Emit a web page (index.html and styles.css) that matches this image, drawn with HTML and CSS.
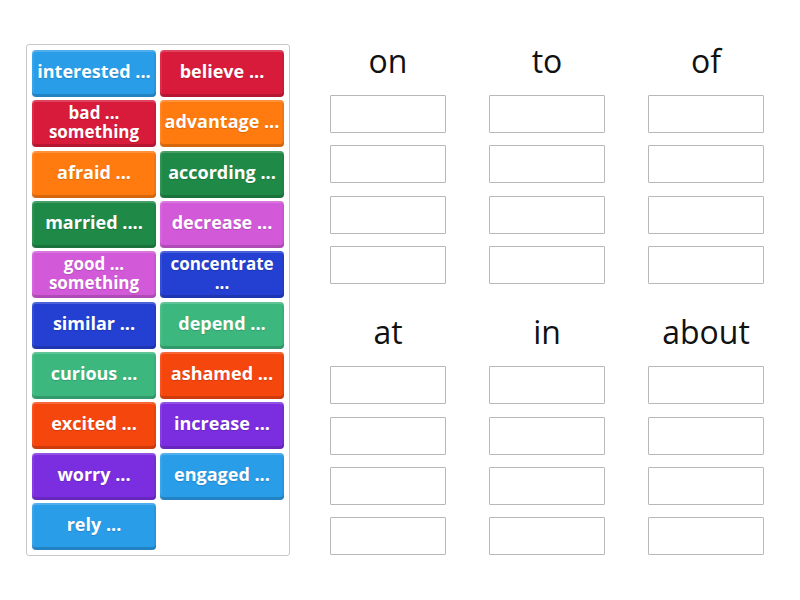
FILE: index.html
```html
<!DOCTYPE html>
<html>
<head>
<meta charset="utf-8">
<link rel="stylesheet" href="styles.css">
</head>
<body>
<div class="page">
  <div class="bank">
    <div class="tile blue">interested ...</div>
    <div class="tile red">believe ...</div>
    <div class="tile red two">bad ...<br>something</div>
    <div class="tile orange">advantage ...</div>
    <div class="tile orange">afraid ...</div>
    <div class="tile green">according ...</div>
    <div class="tile green">married ....</div>
    <div class="tile pink">decrease ...</div>
    <div class="tile pink two">good ...<br>something</div>
    <div class="tile royal two">concentrate<br>...</div>
    <div class="tile royal">similar ...</div>
    <div class="tile teal">depend ...</div>
    <div class="tile teal">curious ...</div>
    <div class="tile redorange">ashamed ...</div>
    <div class="tile redorange">excited ...</div>
    <div class="tile purple">increase ...</div>
    <div class="tile purple">worry ...</div>
    <div class="tile blue">engaged ...</div>
    <div class="tile blue">rely ...</div>
  </div>
  <div class="targets">
    <div class="group">
      <div class="head">on</div>
      <div class="box"></div><div class="box"></div><div class="box"></div><div class="box"></div>
    </div>
    <div class="group">
      <div class="head">to</div>
      <div class="box"></div><div class="box"></div><div class="box"></div><div class="box"></div>
    </div>
    <div class="group">
      <div class="head">of</div>
      <div class="box"></div><div class="box"></div><div class="box"></div><div class="box"></div>
    </div>
    <div class="group">
      <div class="head">at</div>
      <div class="box"></div><div class="box"></div><div class="box"></div><div class="box"></div>
    </div>
    <div class="group">
      <div class="head">in</div>
      <div class="box"></div><div class="box"></div><div class="box"></div><div class="box"></div>
    </div>
    <div class="group">
      <div class="head">about</div>
      <div class="box"></div><div class="box"></div><div class="box"></div><div class="box"></div>
    </div>
  </div>
</div>
</body>
</html>
```
FILE: styles.css
```css
html, body {
  margin: 0;
  padding: 0;
  background: #ffffff;
  font-family: "Open Sans", "Noto Sans", sans-serif;
}
.page {
  display: flex;
  align-items: flex-start;
  padding: 44px 0 0 26px;
}
.bank {
  box-sizing: border-box;
  width: 264px;
  height: 512px;
  border: 1px solid #c8c8c8;
  border-radius: 3px;
  padding: 5px;
  display: grid;
  grid-template-columns: 124px 124px;
  grid-auto-rows: 47px;
  column-gap: 4px;
  row-gap: 3.33px;
}
.tile {
  box-sizing: border-box;
  border-radius: 4px;
  display: flex;
  align-items: center;
  justify-content: center;
  text-align: center;
  color: #ffffff;
  font-weight: 700;
  font-size: 18px;
  line-height: 20px;
  padding: 0 2px 5px;
  white-space: nowrap;
  text-shadow: 0 1px 1px rgba(0,0,0,0.15);
  box-shadow: inset 0 -3px 0 rgba(0,0,0,0.16), inset 0 2px 0 rgba(255,255,255,0.18), inset 2px 0 0 rgba(255,255,255,0.08), inset -2px 0 0 rgba(0,0,0,0.05);
}
.tile.two {
  font-size: 17px;
  line-height: 19px;
  padding-bottom: 4px;
}
.blue { background: #2a9de8; }
.red { background: #d81b3b; }
.orange { background: #ff7b10; }
.green { background: #1f8a47; }
.pink { background: #d25ad8; }
.royal { background: #2340d2; }
.teal { background: #3cb87f; }
.redorange { background: #f5460e; }
.purple { background: #7b2ee0; }

.targets {
  margin-left: 40px;
  margin-top: -5px;
  display: grid;
  grid-template-columns: 116px 116px 116px;
  column-gap: 43px;
  row-gap: 26px;
}
.group {
  display: flex;
  flex-direction: column;
}
.head {
  font-size: 32px;
  line-height: 44px;
  height: 44px;
  text-align: center;
  color: #111111;
  margin-bottom: 12px;
}
.box {
  box-sizing: border-box;
  height: 38px;
  border: 1px solid #b8b8b8;
  border-radius: 1px;
  margin-bottom: 12.4px;
}
.box:last-child { margin-bottom: 0; }
```
